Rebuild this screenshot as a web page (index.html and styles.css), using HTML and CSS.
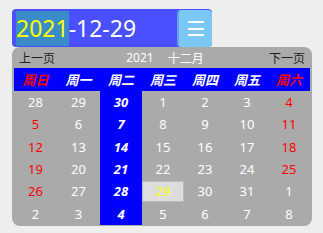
FILE: index.html
```html
<!DOCTYPE html>
<html lang="zh-CN">
<head>
    <meta charset="UTF-8">
    <title>日期选择</title>
    <link rel="stylesheet" href="styles.css">
</head>
<body>
    <div class="picker">
        <div class="field">
            <div class="value"><span class="sel">2021</span>-12-29</div>
            <button class="menu"><span></span><span></span><span></span></button>
        </div>
        <div class="cal">
            <div class="cal-head">
                <span class="nav">上一页</span>
                <span class="title"><span>2021</span><span>十二月</span></span>
                <span class="nav">下一页</span>
            </div>
            <div class="weekdays">
                <span class="wk">周日</span><span>周一</span><span>周二</span><span>周三</span><span>周四</span><span>周五</span><span class="wk">周六</span>
            </div>
            <div class="days">
                <span>28</span><span>29</span><span>30</span><span>1</span><span>2</span><span>3</span><span class="wk">4</span>
                <span class="wk">5</span><span>6</span><span>7</span><span>8</span><span>9</span><span>10</span><span class="wk">11</span>
                <span class="wk">12</span><span>13</span><span>14</span><span>15</span><span>16</span><span>17</span><span class="wk">18</span>
                <span class="wk">19</span><span>20</span><span>21</span><span>22</span><span>23</span><span>24</span><span class="wk">25</span>
                <span class="wk">26</span><span>27</span><span>28</span><span class="today">29</span><span>30</span><span>31</span><span>1</span>
                <span>2</span><span>3</span><span>4</span><span>5</span><span>6</span><span>7</span><span>8</span>
            </div>
        </div>
    </div>
</body>
</html>
```
FILE: styles.css
```css
body {
    margin: 0;
    background-color: #eeeeee;
    font-family: "Noto Sans", "Noto Sans CJK SC", sans-serif;
}
.picker {
    width: 300px;
    padding: 9px 0 0 12px;
}
.field {
    display: flex;
    align-items: flex-start;
    width: 200px;
    height: 38px;
    background-color: #4a50ff;
    border-radius: 4px;
}
.value {
    padding: 2px 0 0 4px;
    font-size: 23px;
    line-height: 35px;
    color: white;
}
.value .sel {
    display: inline-block;
    background-color: #3a8cc8;
    color: #ffff00;
}
.menu {
    display: flex;
    flex-direction: column;
    justify-content: center;
    align-items: center;
    gap: 4.4px;
    margin: 1px 0 0 auto;
    width: 35px;
    height: 37px;
    padding: 0;
    border: none;
    border-left: 2px solid #68a2f4;
    border-radius: 4px;
    background-color: #7cc8f4;
}
.menu span {
    display: block;
    width: 16px;
    height: 2px;
    background: white;
}
.cal {
    padding: 0 2px 1px 2px;
    background-color: #aaaaaa;
    border-radius: 8px;
}
.cal-head {
    display: flex;
    justify-content: space-between;
    align-items: center;
    height: 21px;
    padding: 0 5px;
    font-size: 12px;
}
.cal-head .nav {
    color: #222;
}
.cal-head .title {
    display: flex;
    gap: 14px;
    margin-left: 6px;
    color: white;
}
.weekdays,
.days {
    display: grid;
    grid-template-columns: 43px 43px 42px 42px 42px 42px 42px;
}
.weekdays {
    height: 23px;
    align-items: center;
    background-color: #0000ff;
    font-size: 13px;
    font-weight: bold;
    font-style: italic;
    color: white;
    text-align: center;
}
.days {
    grid-auto-rows: 22.33px;
    font-size: 13px;
    color: white;
}
.days span {
    display: flex;
    align-items: center;
    justify-content: center;
}
.weekdays .wk,
.days .wk {
    color: #ff0000;
}
.days span:nth-child(7n+3) {
    background-color: #0000ff;
    font-weight: bold;
    font-style: italic;
}
.days .today {
    margin: 1px 0;
    background-color: #dddddd;
    border: 1px solid #bbbbbb;
    color: #ffff00;
}
```
